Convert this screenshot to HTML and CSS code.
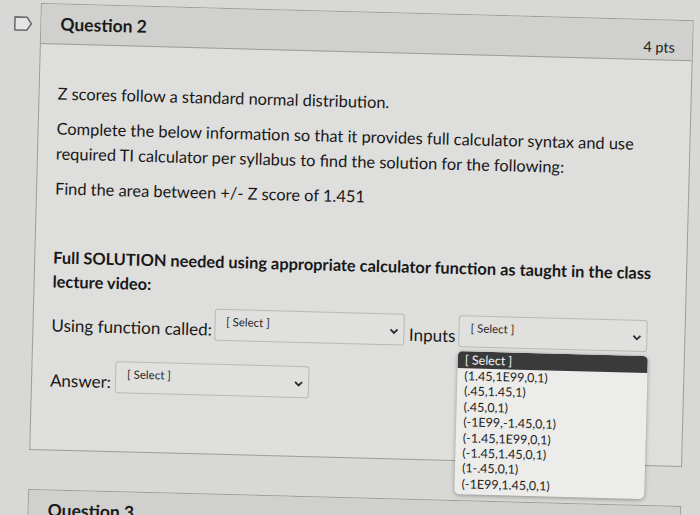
FILE: index.html
```html
<!DOCTYPE html>
<html>
<head>
<meta charset="utf-8">
<link rel="stylesheet" href="styles.css">
</head>
<body>
<div class="screen">
  <div class="stage">
    <div class="qrow">
      <div class="gutter">
        <svg class="flag" width="20" height="16" viewBox="0 0 20 16"><path d="M1.5 1.5 H13.5 L18 8 L13.5 14.5 H1.5 Z" fill="#e4e4e2" stroke="#6d6d6d" stroke-width="1.6" stroke-linejoin="round"/></svg>
      </div>
      <div class="card">
        <div class="card-head">
          <span class="title">Question 2</span>
          <span class="pts">4 pts</span>
        </div>
        <div class="card-body">
          <p class="para">Z scores follow a standard normal distribution.</p>
          <p class="para">Complete the below information so that it provides full calculator syntax and use required TI calculator per syllabus to find the solution for the following:</p>
          <p class="para">Find the area between +/- Z score of 1.451</p>
          <p class="para strong">Full SOLUTION needed using appropriate calculator function as taught in the class lecture video:</p>
          <div class="field-row first">
            <span class="label">Using function called:</span>
            <div class="select w1">
              <span class="sel-text">[ Select ]</span>
              <svg class="chev" width="9" height="6" viewBox="0 0 9 6"><path d="M1 1 L4.5 4.5 L8 1" fill="none" stroke="#2a2a2a" stroke-width="1.8"/></svg>
            </div>
            <span class="label inputs">Inputs</span>
            <div class="select w2">
              <span class="sel-text">[ Select ]</span>
              <svg class="chev" width="9" height="6" viewBox="0 0 9 6"><path d="M1 1 L4.5 4.5 L8 1" fill="none" stroke="#2a2a2a" stroke-width="1.8"/></svg>
              <ul class="dropdown">
                <li class="active">[ Select ]</li>
                <li>(1.45,1E99,0,1)</li>
                <li>(.45,1.45,1)</li>
                <li>(.45,0,1)</li>
                <li>(-1E99,-1.45,0,1)</li>
                <li>(-1.45,1E99,0,1)</li>
                <li>(-1.45,1.45,0,1)</li>
                <li>(1-.45,0,1)</li>
                <li>(-1E99,1.45,0,1)</li>
              </ul>
            </div>
          </div>
          <div class="field-row second">
            <span class="label">Answer:</span>
            <div class="select w3">
              <span class="sel-text">[ Select ]</span>
              <svg class="chev" width="9" height="6" viewBox="0 0 9 6"><path d="M1 1 L4.5 4.5 L8 1" fill="none" stroke="#2a2a2a" stroke-width="1.8"/></svg>
            </div>
          </div>
        </div>
      </div>
    </div>
    <div class="qrow next">
      <div class="gutter">
        <svg class="flag" width="20" height="16" viewBox="0 0 20 16"><path d="M1.5 1.5 H13.5 L18 8 L13.5 14.5 H1.5 Z" fill="#e4e4e2" stroke="#6d6d6d" stroke-width="1.6" stroke-linejoin="round"/></svg>
      </div>
      <div class="card">
        <div class="card-head">
          <span class="title">Question 3</span>
        </div>
      </div>
    </div>
  </div>
</div>
</body>
</html>
```
FILE: styles.css
```css
* { box-sizing: border-box; }
html, body { margin: 0; padding: 0; }
body {
  width: 700px;
  height: 515px;
  overflow: hidden;
  background: #d8d8d6;
  font-family: "Lato", "Open Sans", sans-serif;
  color: #181818;
}
.screen {
  width: 700px;
  height: 515px;
  overflow: hidden;
}
.stage {
  width: 720px;
  padding-top: 2px;
  transform: rotate(1.5deg);
  transform-origin: 0 0;
}
.qrow {
  display: flex;
  align-items: flex-start;
}
.qrow.next { margin-top: 39px; }
.gutter {
  width: 41px;
  flex: none;
  display: flex;
  justify-content: flex-start;
  padding: 13px 0 0 14px;
}
.qrow.next .gutter { padding: 10px 0 0 0; margin-left: -10px; width: 51px; }
.card {
  width: 653px;
  flex: none;
  border: 1px solid #9c9c9a;
  background: #dededc;
}
.card-head {
  height: 40px;
  background: #d0d0ce;
  border-bottom: 1px solid #9c9c9a;
  display: flex;
  align-items: center;
  justify-content: space-between;
  padding: 0 17px 0 19px;
}
.title {
  font-size: 17.5px;
  font-weight: 700;
  color: #1a1a1a;
}
.pts {
  font-size: 14.5px;
  padding-top: 13px;
  color: #222;
}
.card-body {
  padding: 36px 18px 58px 18px;
}
.para {
  margin: 0 0 10px 0;
  font-size: 16.4px;
  line-height: 25px;
}
.para.strong {
  font-weight: 700;
  margin-top: 45px;
  line-height: 24px;
  font-size: 16.4px;
}
.field-row {
  display: flex;
  align-items: center;
}
.field-row.first { margin-top: 11px; }
.field-row.second { margin-top: 23px; }
.label {
  font-size: 17px;
  padding-top: 9px;
}
.inputs { margin-left: 5px; margin-right: 3px; }
.select {
  position: relative;
  height: 32px;
  border: 1px solid #b9b9b7;
  border-radius: 3px;
  background: #e0e0de;
  display: flex;
  align-items: center;
  justify-content: space-between;
  padding: 0 5px 0 11px;
}
.w1 { width: 190px; margin-left: 2px; }
.w2 { width: 189px; }
.w3 { width: 194px; margin-left: 4px; }
.sel-text {
  font-size: 11.5px;
  color: #2b2b2b;
  align-self: flex-start;
  padding-top: 5px;
}
.chev { margin-top: 4px; }
.dropdown {
  position: absolute;
  top: 35px;
  left: -1px;
  width: 190px;
  margin: 0;
  padding: 0 0 3px 0;
  list-style: none;
  background: #ececeb;
  border-radius: 5px;
  box-shadow: 0 1px 4px rgba(0,0,0,0.35);
  overflow: hidden;
}
.dropdown li {
  font-size: 12.5px;
  line-height: 15.4px;
  padding-left: 7px;
  color: #1e1e1e;
}
.dropdown li.active {
  background: #3a3a3a;
  color: #f2f2f2;
  line-height: 17px;
}
```
